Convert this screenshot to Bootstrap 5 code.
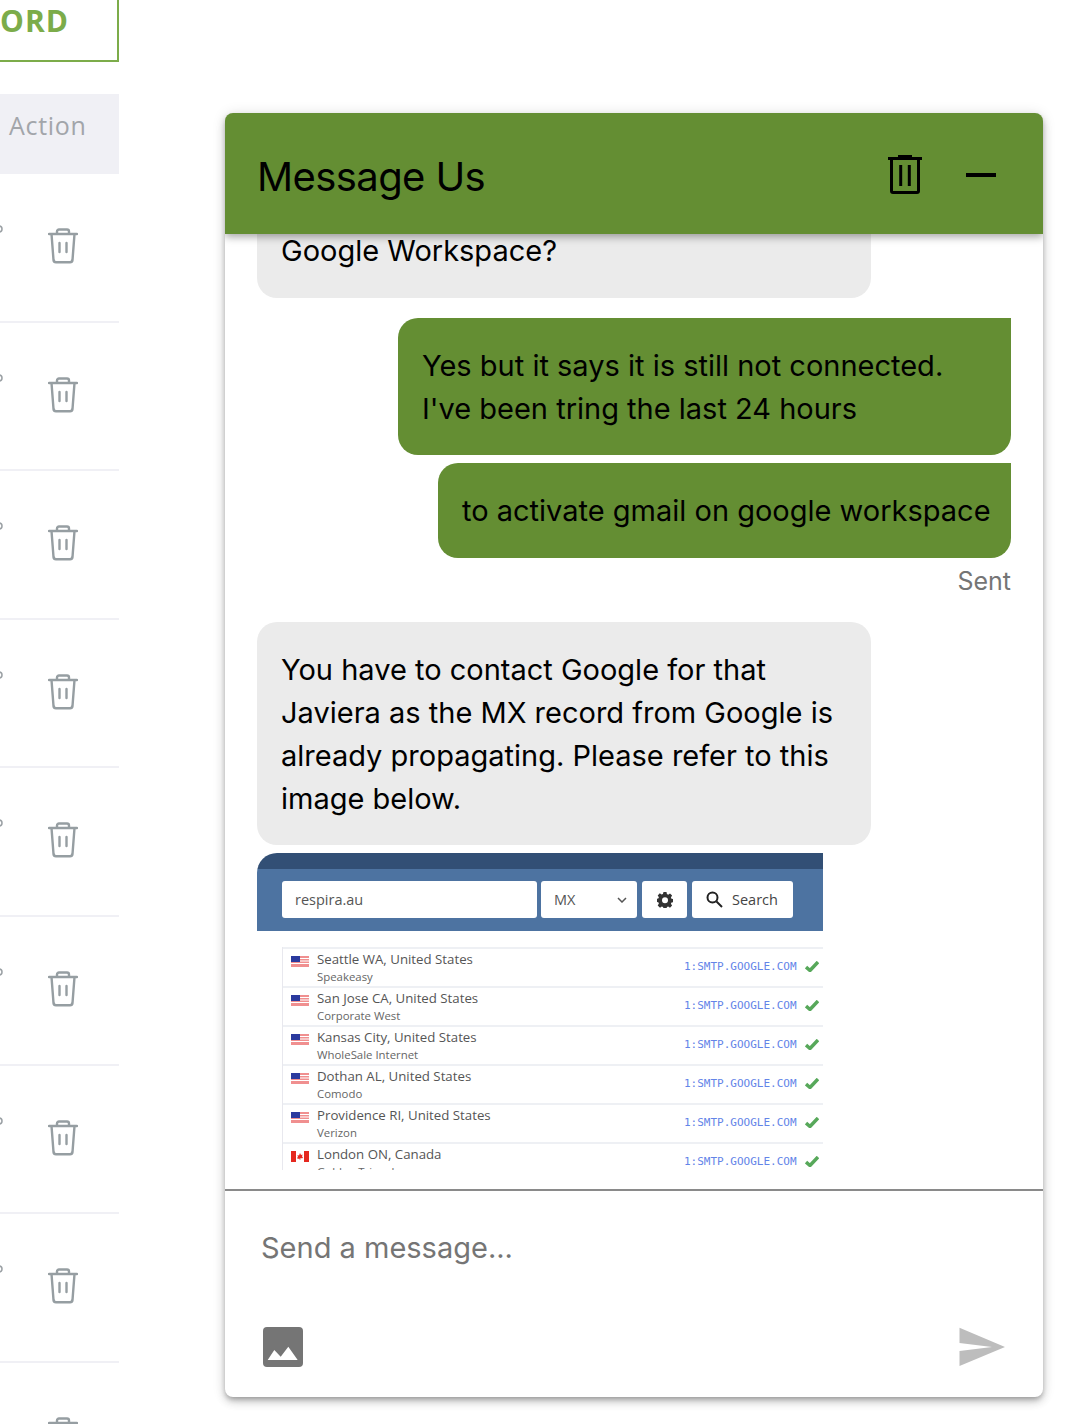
<!DOCTYPE html>
<html lang="en">
<head>
<meta charset="utf-8">
<link href="https://cdn.jsdelivr.net/npm/bootstrap@5.3.0/dist/css/bootstrap.min.css" rel="stylesheet">
<script src="https://cdn.jsdelivr.net/npm/bootstrap@5.3.0/dist/js/bootstrap.bundle.min.js"></script>
<style>
html,body{height:1424px;overflow:hidden;background:#fff;}
body{position:relative;font-family:Inter,sans-serif;}
.left-pane{width:119px;height:1424px;overflow:hidden;}
.rec-btn{height:62px;margin-left:-300px;border:2px solid #7cac4a;border-top:0;color:#7cac4a;font:700 30px/1 "Open Sans",sans-serif;letter-spacing:1px;padding:6px 48px 0 0;text-align:right;white-space:nowrap;}
.act-head{height:80px;margin-top:32px;background:#f0f0f5;color:#a2a5aa;font:400 25px/1 "Open Sans",sans-serif;letter-spacing:.7px;padding:19px 0 0 9px;}
.act-row{height:148.6px;border-bottom:2px solid #f0f0f5;position:relative;padding:54px 0 0 48px;}
.peek{position:absolute;left:-4px;top:50px;}
.chat-win{position:absolute;left:225px;top:113px;width:818px;height:1284px;border-radius:8px;background:#fff;box-shadow:0 3px 5px -1px rgba(0,0,0,.25),0 5px 10px rgba(0,0,0,.16),0 1px 14px rgba(0,0,0,.12);overflow:hidden;}
.chat-top{height:121px;flex:none;background:#648e33;color:#000;padding:0 47px 0 32px;box-shadow:0 3px 8px rgba(0,0,0,.35);position:relative;z-index:2;}
.chat-title{font:400 40px/1 Inter,sans-serif;letter-spacing:-.6px;margin-top:6px;}
.head-icons{gap:44px;margin-top:3px;}
.chat-feed{flex:1 1 0;min-height:0;overflow:hidden;padding:0 32px 19px;gap:20px;font-size:29px;line-height:43px;}
.bub{padding:26px 24px 25.5px;border-radius:20px;flex:none;color:#000;}
.bub-in{width:614px;background:#ebebeb;align-self:flex-start;}
.bub-out{background:#648e33;align-self:flex-end;border-top-right-radius:0;}
.bub-w613{width:613px;}
.bub-w573{width:573px;margin-top:-12px;white-space:nowrap;}
.bub-after{margin-top:6px;}
.sent-tag{color:#757575;font-size:25px;line-height:30px;text-align:right;margin-top:-12px;}
.shot{flex:none;width:566px;height:317px;overflow:hidden;border-radius:20px 0 0 0;margin-top:-12px;background:#fff;font-family:"Open Sans",sans-serif;color:#555;}
.shot-dark{height:16px;background:#324f75;}
.shot-blue{height:62px;background:#4d73a1;padding:12px 0 0 25px;}
.sfield{height:37px;background:#fff;border-radius:3px;font-size:14.5px;line-height:37px;color:#555;flex:none;}
.sf-a{width:255px;padding-left:13px;margin-right:4px;}
.sf-b{width:96px;padding:0 10px 0 13px;margin-right:5px;}
.sf-c{width:45px;margin-right:5px;}
.sf-d{width:101px;padding-left:14px;gap:9px;color:#444;}
.shot-list{margin:16px 0 0 25px;border-left:1px solid #e8e8ee;}
.shot-item{height:39px;border-top:2px solid #eef0f4;padding:0 0 0 34px;position:relative;}
.shot-item .flg{position:absolute;left:8px;top:7px;}
.place{font-size:13.25px;line-height:20px;color:#555;}
.prov{font-size:11.4px;line-height:15px;color:#666;}
.mxhost{position:absolute;left:401px;top:11px;font:11px/14px "DejaVu Sans Mono",monospace;color:#6384e8;}
.mxok{position:absolute;left:522px;top:12px;}
.chat-foot{height:208px;flex:none;border-top:2px solid #8a8a8a;padding:0 38px 0 38px;}
.ph{font-size:29px;line-height:36px;color:#757575;padding-top:39px;margin-left:-2px;}
.foot-icons{margin-top:61px;}
</style>
</head>
<body>
<div class="left-pane">
  <div class="rec-btn">ADD RECORD</div>
  <div class="act-head">Action</div>
  <div class="act-row"><svg class="peek" width="8" height="10" viewBox="0 0 8 10"><circle cx="3" cy="5" r="3" fill="none" stroke="#9aa0a4" stroke-width="1.5"/></svg><svg width="30" height="36" viewBox="0 0 30 36" fill="none" stroke="#969ea2" stroke-width="2.4" stroke-linecap="round" stroke-linejoin="round"><path d="M1 6h28M3.500 6l2 26a2.500 2.500 0 0 0 2.500 2.200h14a2.500 2.500 0 0 0 2.500-2.200l2-26M9 6V3.500A2 2 0 0 1 11 1.500h8a2 2 0 0 1 2 2V6M11.500 15v9M18.500 15v9"/></svg></div>
  <div class="act-row"><svg class="peek" width="8" height="10" viewBox="0 0 8 10"><circle cx="3" cy="5" r="3" fill="none" stroke="#9aa0a4" stroke-width="1.5"/></svg><svg width="30" height="36" viewBox="0 0 30 36" fill="none" stroke="#969ea2" stroke-width="2.4" stroke-linecap="round" stroke-linejoin="round"><path d="M1 6h28M3.500 6l2 26a2.500 2.500 0 0 0 2.500 2.200h14a2.500 2.500 0 0 0 2.500-2.200l2-26M9 6V3.500A2 2 0 0 1 11 1.500h8a2 2 0 0 1 2 2V6M11.500 15v9M18.500 15v9"/></svg></div>
  <div class="act-row"><svg class="peek" width="8" height="10" viewBox="0 0 8 10"><circle cx="3" cy="5" r="3" fill="none" stroke="#9aa0a4" stroke-width="1.5"/></svg><svg width="30" height="36" viewBox="0 0 30 36" fill="none" stroke="#969ea2" stroke-width="2.4" stroke-linecap="round" stroke-linejoin="round"><path d="M1 6h28M3.500 6l2 26a2.500 2.500 0 0 0 2.500 2.200h14a2.500 2.500 0 0 0 2.500-2.200l2-26M9 6V3.500A2 2 0 0 1 11 1.500h8a2 2 0 0 1 2 2V6M11.500 15v9M18.500 15v9"/></svg></div>
  <div class="act-row"><svg class="peek" width="8" height="10" viewBox="0 0 8 10"><circle cx="3" cy="5" r="3" fill="none" stroke="#9aa0a4" stroke-width="1.5"/></svg><svg width="30" height="36" viewBox="0 0 30 36" fill="none" stroke="#969ea2" stroke-width="2.4" stroke-linecap="round" stroke-linejoin="round"><path d="M1 6h28M3.500 6l2 26a2.500 2.500 0 0 0 2.500 2.200h14a2.500 2.500 0 0 0 2.500-2.200l2-26M9 6V3.500A2 2 0 0 1 11 1.500h8a2 2 0 0 1 2 2V6M11.500 15v9M18.500 15v9"/></svg></div>
  <div class="act-row"><svg class="peek" width="8" height="10" viewBox="0 0 8 10"><circle cx="3" cy="5" r="3" fill="none" stroke="#9aa0a4" stroke-width="1.5"/></svg><svg width="30" height="36" viewBox="0 0 30 36" fill="none" stroke="#969ea2" stroke-width="2.4" stroke-linecap="round" stroke-linejoin="round"><path d="M1 6h28M3.500 6l2 26a2.500 2.500 0 0 0 2.500 2.200h14a2.500 2.500 0 0 0 2.500-2.200l2-26M9 6V3.500A2 2 0 0 1 11 1.500h8a2 2 0 0 1 2 2V6M11.500 15v9M18.500 15v9"/></svg></div>
  <div class="act-row"><svg class="peek" width="8" height="10" viewBox="0 0 8 10"><circle cx="3" cy="5" r="3" fill="none" stroke="#9aa0a4" stroke-width="1.5"/></svg><svg width="30" height="36" viewBox="0 0 30 36" fill="none" stroke="#969ea2" stroke-width="2.4" stroke-linecap="round" stroke-linejoin="round"><path d="M1 6h28M3.500 6l2 26a2.500 2.500 0 0 0 2.500 2.200h14a2.500 2.500 0 0 0 2.500-2.200l2-26M9 6V3.500A2 2 0 0 1 11 1.500h8a2 2 0 0 1 2 2V6M11.500 15v9M18.500 15v9"/></svg></div>
  <div class="act-row"><svg class="peek" width="8" height="10" viewBox="0 0 8 10"><circle cx="3" cy="5" r="3" fill="none" stroke="#9aa0a4" stroke-width="1.5"/></svg><svg width="30" height="36" viewBox="0 0 30 36" fill="none" stroke="#969ea2" stroke-width="2.4" stroke-linecap="round" stroke-linejoin="round"><path d="M1 6h28M3.500 6l2 26a2.500 2.500 0 0 0 2.500 2.200h14a2.500 2.500 0 0 0 2.500-2.200l2-26M9 6V3.500A2 2 0 0 1 11 1.500h8a2 2 0 0 1 2 2V6M11.500 15v9M18.500 15v9"/></svg></div>
  <div class="act-row"><svg class="peek" width="8" height="10" viewBox="0 0 8 10"><circle cx="3" cy="5" r="3" fill="none" stroke="#9aa0a4" stroke-width="1.5"/></svg><svg width="30" height="36" viewBox="0 0 30 36" fill="none" stroke="#969ea2" stroke-width="2.4" stroke-linecap="round" stroke-linejoin="round"><path d="M1 6h28M3.500 6l2 26a2.500 2.500 0 0 0 2.500 2.200h14a2.500 2.500 0 0 0 2.500-2.200l2-26M9 6V3.500A2 2 0 0 1 11 1.500h8a2 2 0 0 1 2 2V6M11.500 15v9M18.500 15v9"/></svg></div>
  <div class="act-row"><svg width="30" height="36" viewBox="0 0 30 36" fill="none" stroke="#969ea2" stroke-width="2.4" stroke-linecap="round" stroke-linejoin="round"><path d="M1 6h28M3.500 6l2 26a2.500 2.500 0 0 0 2.500 2.200h14a2.500 2.500 0 0 0 2.500-2.200l2-26M9 6V3.500A2 2 0 0 1 11 1.500h8a2 2 0 0 1 2 2V6M11.500 15v9M18.500 15v9"/></svg></div>
</div>

<div class="chat-win d-flex flex-column">
  <div class="chat-top d-flex align-items-center justify-content-between">
    <div class="chat-title">Message Us</div>
    <div class="head-icons d-flex align-items-center">
      <svg width="34" height="40" viewBox="0 0 34 40" fill="none" stroke="#000" stroke-width="3"><path d="M0 3.500h34M3.500 3.500V36a1.500 1.500 0 0 0 1.500 1.500h24a1.500 1.500 0 0 0 1.500-1.500V3.500M10 1h14M12.700 10v21M21.300 10v21"/></svg>
      <svg width="30" height="4" viewBox="0 0 30 4"><rect width="30" height="4" fill="#000"/></svg>
    </div>
  </div>
  <div class="chat-feed d-flex flex-column justify-content-end">
    <div class="bub bub-in">Have you set up your<br>Google Workspace?</div>
    <div class="bub bub-out bub-w613">Yes but it says it is still not connected.<br>I've been tring the last 24 hours</div>
    <div class="bub bub-out bub-w573">to activate gmail on google workspace</div>
    <div class="sent-tag">Sent</div>
    <div class="bub bub-in bub-after">You have to contact Google for that Javiera as the MX record from Google is already propagating. Please refer to this image below.</div>
    <div class="shot">
      <div class="shot-dark"></div>
      <div class="shot-blue d-flex">
        <div class="sfield sf-a">respira.au</div>
        <div class="sfield sf-b d-flex justify-content-between align-items-center">MX<svg width="10" height="6" viewBox="0 0 10 6" fill="none" stroke="#555" stroke-width="1.500"><path d="M1 1l4 4 4-4"/></svg></div>
        <div class="sfield sf-c d-flex justify-content-center align-items-center"><svg width="16" height="16" viewBox="0 0 16 16"><path fill="#333" fill-rule="evenodd" d="M6.500 0h3l.4 2.100 1.300.6 1.800-1.200 2.100 2.100-1.200 1.800.6 1.300 2.100.4v3l-2.100.4-.6 1.300 1.200 1.800-2.100 2.100-1.800-1.200-1.300.6-.4 2.100h-3l-.4-2.100-1.300-.6-1.800 1.200L.7 13.400l1.200-1.800-.6-1.300L-.8 9.900V6.900l2.100-.4.600-1.300L.7 3.400l2.100-2.100 1.800 1.200 1.300-.6zM8 5.200a3 3 0 1 0 0 6 3 3 0 0 0 0-6z"/></svg></div>
        <div class="sfield sf-d d-flex align-items-center"><svg width="17" height="17" viewBox="0 0 17 17" fill="none" stroke="#222" stroke-width="2"><circle cx="6.500" cy="6.500" r="5"/><path d="M10.500 10.500l5.500 5.500"/></svg><span>Search</span></div>
      </div>
      <div class="shot-list">
        <div class="shot-item"><svg class="flg" width="18" height="11" viewBox="0 0 18 11"><rect width="18" height="11" fill="#f08f8f"/><path d="M0 2.500h18M0 5h18M0 7.500h18" stroke="#fff" stroke-width="1"/><rect width="9" height="6" fill="#2b3a9e"/></svg><div class="place">Seattle WA, United States</div><div class="prov">Speakeasy</div><div class="mxhost">1:SMTP.GOOGLE.COM</div><svg class="mxok" width="14" height="11" viewBox="0 0 14 11"><path d="M1 6l4 3.500 8-8.500" fill="none" stroke="#57a85a" stroke-width="3.500"/></svg></div>
        <div class="shot-item"><svg class="flg" width="18" height="11" viewBox="0 0 18 11"><rect width="18" height="11" fill="#f08f8f"/><path d="M0 2.500h18M0 5h18M0 7.500h18" stroke="#fff" stroke-width="1"/><rect width="9" height="6" fill="#2b3a9e"/></svg><div class="place">San Jose CA, United States</div><div class="prov">Corporate West</div><div class="mxhost">1:SMTP.GOOGLE.COM</div><svg class="mxok" width="14" height="11" viewBox="0 0 14 11"><path d="M1 6l4 3.500 8-8.500" fill="none" stroke="#57a85a" stroke-width="3.500"/></svg></div>
        <div class="shot-item"><svg class="flg" width="18" height="11" viewBox="0 0 18 11"><rect width="18" height="11" fill="#f08f8f"/><path d="M0 2.500h18M0 5h18M0 7.500h18" stroke="#fff" stroke-width="1"/><rect width="9" height="6" fill="#2b3a9e"/></svg><div class="place">Kansas City, United States</div><div class="prov">WholeSale Internet</div><div class="mxhost">1:SMTP.GOOGLE.COM</div><svg class="mxok" width="14" height="11" viewBox="0 0 14 11"><path d="M1 6l4 3.500 8-8.500" fill="none" stroke="#57a85a" stroke-width="3.500"/></svg></div>
        <div class="shot-item"><svg class="flg" width="18" height="11" viewBox="0 0 18 11"><rect width="18" height="11" fill="#f08f8f"/><path d="M0 2.500h18M0 5h18M0 7.500h18" stroke="#fff" stroke-width="1"/><rect width="9" height="6" fill="#2b3a9e"/></svg><div class="place">Dothan AL, United States</div><div class="prov">Comodo</div><div class="mxhost">1:SMTP.GOOGLE.COM</div><svg class="mxok" width="14" height="11" viewBox="0 0 14 11"><path d="M1 6l4 3.500 8-8.500" fill="none" stroke="#57a85a" stroke-width="3.500"/></svg></div>
        <div class="shot-item"><svg class="flg" width="18" height="11" viewBox="0 0 18 11"><rect width="18" height="11" fill="#f08f8f"/><path d="M0 2.500h18M0 5h18M0 7.500h18" stroke="#fff" stroke-width="1"/><rect width="9" height="6" fill="#2b3a9e"/></svg><div class="place">Providence RI, United States</div><div class="prov">Verizon</div><div class="mxhost">1:SMTP.GOOGLE.COM</div><svg class="mxok" width="14" height="11" viewBox="0 0 14 11"><path d="M1 6l4 3.500 8-8.500" fill="none" stroke="#57a85a" stroke-width="3.500"/></svg></div>
        <div class="shot-item"><svg class="flg" width="18" height="11" viewBox="0 0 18 11"><rect width="18" height="11" fill="#fff"/><rect width="5" height="11" fill="#e5281f"/><rect x="13" width="5" height="11" fill="#e5281f"/><path d="M9 2l1 2 1.500-.5-.5 2.500 1-.3-.5 1.500H9.300V9h-.6V7.700H6.500L6 6.200l1 .3-.5-2.500L8 4.500z" fill="#e5281f"/></svg><div class="place">London ON, Canada</div><div class="prov">Golden Triangle</div><div class="mxhost">1:SMTP.GOOGLE.COM</div><svg class="mxok" width="14" height="11" viewBox="0 0 14 11"><path d="M1 6l4 3.500 8-8.500" fill="none" stroke="#57a85a" stroke-width="3.500"/></svg></div>
      </div>
    </div>
  </div>
  <div class="chat-foot">
    <div class="ph">Send a message...</div>
    <div class="foot-icons d-flex justify-content-between align-items-center">
      <svg width="40" height="40" viewBox="0 0 40 40"><rect width="40" height="40" rx="4" fill="#757575"/><path d="M4.700 33L11.300 23l6.400 6.700 7.600-10L34.700 33z" fill="#fff"/></svg>
      <svg width="46" height="40" viewBox="0 0 46 40"><path d="M.5 .7L46 20 .5 39V24L33 20 .5 16z" fill="#bdbdbd"/></svg>
    </div>
  </div>
</div>
</body>
</html>
